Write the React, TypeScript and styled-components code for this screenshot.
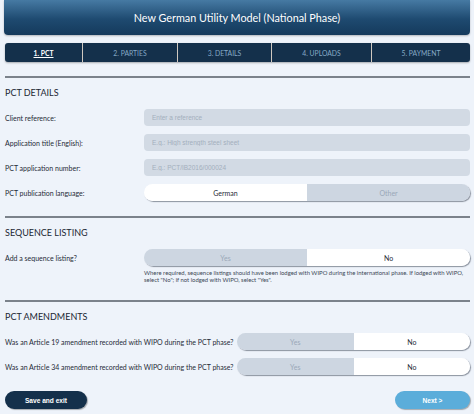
import React from 'react'
import styled, { createGlobalStyle } from 'styled-components'

const GlobalStyle = createGlobalStyle`
  html, body {
    margin: 0;
    padding: 0;
    background: #eef3fa;
  }
  body {
    font-family: Lato, "Open Sans", sans-serif;
    color: #1f2b38;
  }
`;

const Page = styled.div`
  width: 474px;
  height: 414px;
  padding: 0 4px 0 5px;
  box-sizing: border-box;
  overflow: hidden;
`;

const Header = styled.div`
  height: 35px;
  margin-left: -1px;
  border-radius: 0 0 4px 4px;
  background: linear-gradient(to bottom, #467aa3 0%, #1e4a70 55%, #153a5c 100%);
  box-shadow: 0 1px 2px rgba(0, 0, 0, 0.25);
  display: flex;
  align-items: center;
  justify-content: center;
  color: #ffffff;
  font-size: 10.8px;
`;

const Tabs = styled.div`
  margin-top: 8px;
  height: 19px;
  display: grid;
  grid-template-columns: 77px 95px 94px 100px 1fr;
  background: #14304b;
  border-radius: 3px;
  box-shadow: 0 1px 2px rgba(0, 0, 0, 0.3);
  overflow: hidden;
`;

const Tab = styled.div<{ $active?: boolean; $first?: boolean }>`
  display: flex;
  align-items: center;
  justify-content: center;
  font-size: 6.8px;
  text-transform: uppercase;
  color: ${p => (p.$active ? '#ffffff' : '#86a9c6')};
  font-weight: ${p => (p.$active ? 700 : 400)};
  text-decoration: ${p => (p.$active ? 'underline' : 'none')};
  border-left: ${p => (p.$first ? 'none' : '1px solid #cfc8c0')};
`;

const Section = styled.section`
  border-top: 2px solid #7b828b;
  padding: 8px 0 15px;
  &:first-of-type {
    margin-top: 14px;
  }
`;

const SectionTitle = styled.h2`
  margin: 0 0 9px;
  height: 14px;
  line-height: 14px;
  font-size: 9px;
  font-weight: 400;
  text-transform: uppercase;
  color: #1b2733;
`;

const Rows = styled.div`
  display: flex;
  flex-direction: column;
  gap: 8px;
`;

const Row = styled.div<{ $control: number }>`
  display: grid;
  grid-template-columns: 1fr ${p => p.$control}px;
  align-items: center;
`;

const Label = styled.span`
  font-size: 7px;
  color: #1f2b38;
  white-space: nowrap;
`;

const Field = styled.input`
  height: 17px;
  box-sizing: border-box;
  border: none;
  border-radius: 4px;
  background: #d2dae4;
  padding: 0 8px;
  font-family: "Liberation Sans", Arial, sans-serif;
  font-size: 6.5px;
  color: #1f2b38;
  outline: none;
  &::placeholder {
    color: #a3afbd;
  }
`;

const Toggle = styled.div`
  height: 17px;
  display: grid;
  grid-template-columns: 1fr 1fr;
  border-radius: 9px;
  overflow: hidden;
  box-shadow: 1px 1px 1px rgba(60, 70, 85, 0.55);
`;

const Option = styled.div<{ $on: boolean }>`
  display: flex;
  align-items: center;
  justify-content: center;
  font-size: 7px;
  background: ${p => (p.$on ? '#ffffff' : '#cdd6e1')};
  color: ${p => (p.$on ? '#1f2b38' : '#9aa8b8')};
`;

const Help = styled.p`
  margin: 3px 0 2px 139px;
  font-size: 5.9px;
  line-height: 7px;
  color: #3c4856;
  white-space: nowrap;
`;

const Footer = styled.div`
  display: flex;
  justify-content: space-between;
  padding-top: 1px;
`;

const Button = styled.button<{ $primary?: boolean }>`
  height: 18px;
  width: ${p => (p.$primary ? '75px' : '82px')};
  border: none;
  border-radius: 9px;
  background: ${p => (p.$primary ? '#5badda' : '#14304b')};
  color: #ffffff;
  font-family: "Liberation Sans", Arial, sans-serif;
  font-weight: 700;
  font-size: 6.6px;
  box-shadow: 1px 1px 1px rgba(0, 0, 0, 0.3);
  padding: 0;
`;

const YesNo = ({ value }: { value: 'yes' | 'no' }) => (
  <Toggle>
    <Option $on={value === 'yes'}>Yes</Option>
    <Option $on={value === 'no'}>No</Option>
  </Toggle>
)

const tabs = ['1. PCT', '2. Parties', '3. Details', '4. Uploads', '5. Payment']

const App = () => {
  return (
    <Page>
      <GlobalStyle />
      <Header>New German Utility Model (National Phase)</Header>
      <Tabs>
        {tabs.map((t, i) => (
          <Tab key={t} $active={i === 0} $first={i === 0}>{t}</Tab>
        ))}
      </Tabs>

      <Section>
        <SectionTitle>PCT Details</SectionTitle>
        <Rows>
          <Row $control={326}>
            <Label>Client reference:</Label>
            <Field readOnly placeholder="Enter a reference" />
          </Row>
          <Row $control={326}>
            <Label>Application title (English):</Label>
            <Field readOnly placeholder="E.g.: High strength steel sheet" />
          </Row>
          <Row $control={326}>
            <Label>PCT application number:</Label>
            <Field readOnly placeholder="E.g.: PCT/IB2016/000024" />
          </Row>
          <Row $control={326}>
            <Label>PCT publication language:</Label>
            <Toggle>
              <Option $on>German</Option>
              <Option $on={false}>Other</Option>
            </Toggle>
          </Row>
        </Rows>
      </Section>

      <Section>
        <SectionTitle>Sequence Listing</SectionTitle>
        <Row $control={326}>
          <Label>Add a sequence listing?</Label>
          <YesNo value="no" />
        </Row>
        <Help>
          Where required, sequence listings should have been lodged with WIPO during the international phase. If lodged with WIPO,
          <br />
          select "No"; if not lodged with WIPO, select "Yes".
        </Help>
      </Section>

      <Section>
        <SectionTitle>PCT Amendments</SectionTitle>
        <Rows>
          <Row $control={233}>
            <Label>Was an Article 19 amendment recorded with WIPO during the PCT phase?</Label>
            <YesNo value="no" />
          </Row>
          <Row $control={233}>
            <Label>Was an Article 34 amendment recorded with WIPO during the PCT phase?</Label>
            <YesNo value="no" />
          </Row>
        </Rows>
      </Section>

      <Footer>
        <Button>Save and exit</Button>
        <Button $primary>Next &gt;</Button>
      </Footer>
    </Page>
  )
}

export default App
